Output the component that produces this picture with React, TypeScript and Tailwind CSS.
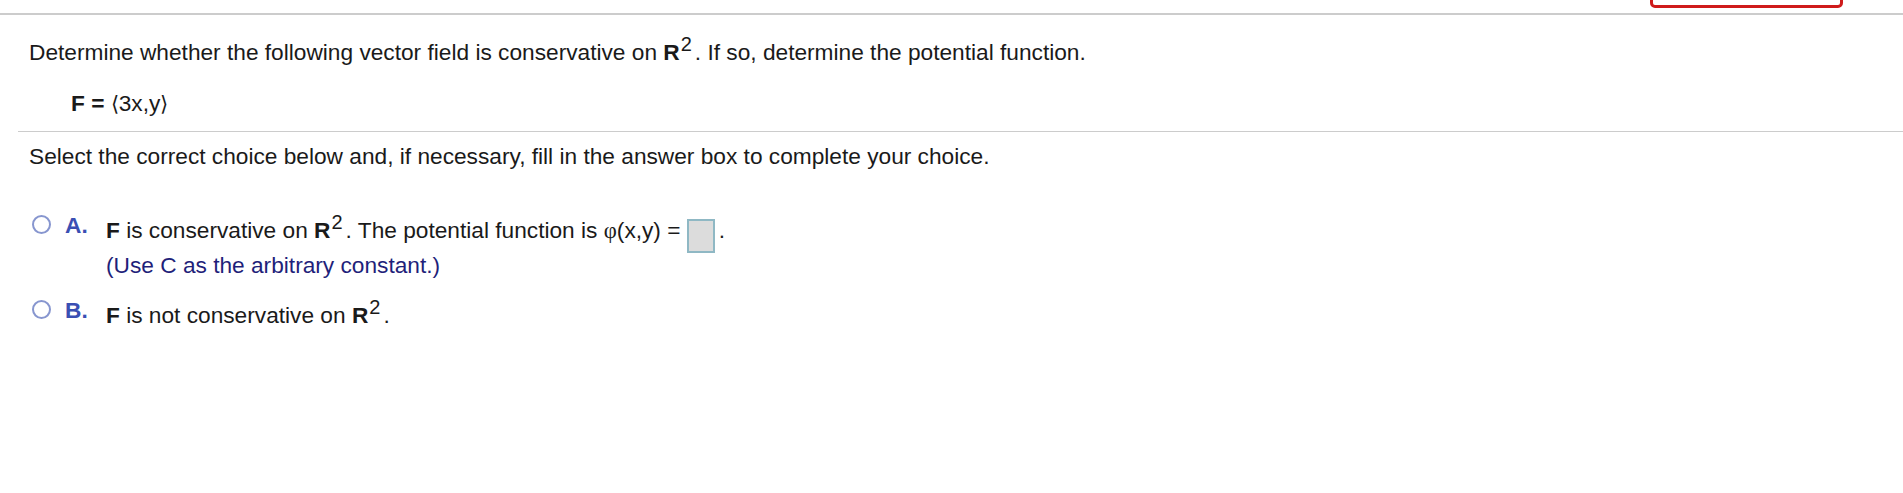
import React from "react";

const Sq = () => (
  <>
    <b>R</b>
    <span className="relative -top-[9px] pl-[1px] pr-[3px] text-[20px]">2</span>
  </>
);

const Radio = ({ letter }: { letter: string }) => (
  <>
    <span className="mt-[-2px] h-[19px] w-[19px] shrink-0 rounded-full border-2 border-[#8796cf] bg-white" />
    <span className="relative -top-[5px] ml-[14px] w-[41px] shrink-0 font-bold text-[#3a4fb3]">
      {letter}.
    </span>
  </>
);

export default function App() {
  return (
    <div className="min-h-[493px] w-full bg-white font-['Liberation_Sans',Arial,sans-serif] text-[22.7px] leading-[26px] text-[#1a1a1a]">
      <div className="relative h-[13px]">
        <div className="absolute left-[1650px] top-[-20px] h-[28px] w-[193px] rounded-b-[5px] border-[3px] border-[#cf1b1b]" />
      </div>
      <div className="h-[2px] bg-[#cccccc]" />

      <div className="pl-[29px] pt-[24px]">
        <p>
          Determine whether the following vector field is conservative on <Sq />. If so,
          determine the potential function.
        </p>
        <p className="mt-[24px] pl-[42px]">
          <b>F =</b>{" "}
          <span className="font-['DejaVu_Sans',sans-serif] text-[21px] font-light">⟨</span>3x,y
          <span className="font-['DejaVu_Sans',sans-serif] text-[21px] font-light">⟩</span>
        </p>
      </div>

      <div className="ml-[18px] mt-[14px] h-[1px] bg-[#cccccc]" />

      <div className="pl-[29px] pt-[11px]">
        <p>Select the correct choice below and, if necessary, fill in the answer box to complete your choice.</p>

        <div className="mt-[48px] flex items-start pl-[3px]">
          <Radio letter="A" />
          <div>
            <p>
              <b>F</b> is conservative on <Sq />. The potential function is{" "}
              <span className="font-['Liberation_Serif',serif]">φ</span>(x,y) ={" "}
              <span className="-my-[6px] inline-block h-[34px] w-[28px] border-2 border-[#8fb8c4] bg-[#dcdcdc] align-[-9px]" />
              <span className="ml-[4px]">.</span>
            </p>
            <p className="mt-[5px] text-[#1f1f7a]">(Use C as the arbitrary constant.)</p>
          </div>
        </div>

        <div className="mt-[24px] flex items-start pl-[3px]">
          <Radio letter="B" />
          <p>
            <b>F</b> is not conservative on <Sq />.
          </p>
        </div>
      </div>
    </div>
  );
}
